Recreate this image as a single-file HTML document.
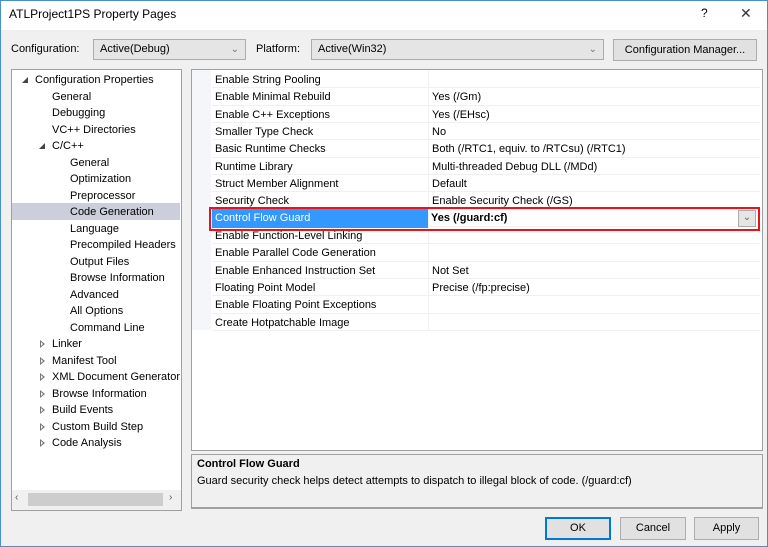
<!DOCTYPE html>
<html><head><style>
*{margin:0;padding:0;box-sizing:border-box}
body{width:768px;height:547px;overflow:hidden;background:#f0f0f0;font-family:"Liberation Sans",sans-serif;font-size:11px;color:#000;position:relative}
.win{position:absolute;left:0;top:0;width:768px;height:547px;border:1px solid #4a90c8}
.a{position:absolute;white-space:nowrap}
.t{position:absolute;line-height:16px;white-space:nowrap}
.btn{position:absolute;background:#e1e1e1;border:1px solid #adadad;text-align:center;line-height:20px}
.combo{position:absolute;background:#e5e5e5;border:1px solid #acacac;line-height:19px;padding-left:6px}
.combo .ch{position:absolute;right:6px;top:0;color:#777;font-size:10px}
.row{position:absolute;left:212px;width:548px;height:17.3px;border-bottom:1px solid #f0f0f0}
.row .n{position:absolute;left:3px;top:1px;line-height:16px}
.row .v{position:absolute;left:220px;top:1px;line-height:16px}
.tri{position:absolute;width:0;height:0}
</style></head><body>
<div class="win"></div>
<div class="a" style="left:1px;top:1px;width:766px;height:29px;background:#fff"></div>
<div class="a" style="left:9px;top:7px;font-size:12px">ATLProject1PS Property Pages</div>
<div class="a" style="left:701px;top:6px;font-size:12px">?</div>
<div class="a" style="left:740px;top:5px;font-size:14px;color:#333;font-weight:100">✕</div>

<div class="a" style="left:11px;top:43px">Configuration:</div>
<div class="combo" style="left:93px;top:39px;width:153px;height:21px">Active(Debug)<span class="ch">&#8964;</span></div>
<div class="a" style="left:256px;top:43px">Platform:</div>
<div class="combo" style="left:311px;top:39px;width:293px;height:21px">Active(Win32)<span class="ch">&#8964;</span></div>
<div class="btn" style="left:613px;top:39px;width:144px;height:22px">Configuration Manager...</div>

<div class="a" style="left:11px;top:69px;width:171px;height:442px;background:#fff;border:1px solid #a0a0a0"></div>
<div class="a" style="left:12px;top:203px;width:168px;height:17px;background:#cccedb"></div>
<div id="tree"></div>
<div class="a" style="left:12px;top:490px;width:169px;height:20px;background:#f0f0f0"></div>
<div class="a" style="left:28px;top:493px;width:135px;height:13px;background:#cdcdcd"></div>
<div class="a" style="left:15px;top:492px;color:#555;font-size:10px">&lsaquo;</div>
<div class="a" style="left:169px;top:492px;color:#555;font-size:10px">&rsaquo;</div>

<div class="a" style="left:191px;top:69px;width:572px;height:382px;background:#fff;border:1px solid #a0a0a0"></div>
<div class="a" style="left:192px;top:70px;width:19px;height:260px;background:#f5f6f9"></div>
<div class="a" style="left:428px;top:70px;width:1px;height:260px;background:#f0f0f0"></div>
<div id="grid"></div>
<div class="a" style="left:212px;top:209px;width:216px;height:19px;background:#3399ff"></div>
<div class="a" style="left:215px;top:212px;color:#fff">Control Flow Guard</div>
<div class="a" style="left:431px;top:212px;font-weight:bold">Yes (/guard:cf)</div>
<div class="a" style="left:738px;top:210px;width:18px;height:17px;background:#e5e5e5;border:1px solid #acacac;font-size:10px;text-align:center;color:#666;line-height:14px">&#8964;</div>
<div class="a" style="left:209px;top:207px;width:551px;height:24px;border:2px solid #e8141c"></div>

<div class="a" style="left:191px;top:454px;width:572px;height:55px;background:#f0f0f0;border:1px solid #a0a0a0;border-bottom:2px solid #a0a0a0"></div>
<div class="a" style="left:197px;top:458px;font-weight:bold">Control Flow Guard</div>
<div class="a" style="left:197px;top:475px">Guard security check helps detect attempts to dispatch to illegal block of code. (/guard:cf)</div>

<div class="btn" style="left:545px;top:517px;width:66px;height:23px;border:1px solid #0078d7;box-shadow:inset 0 0 0 1px #0078d7">OK</div>
<div class="btn" style="left:620px;top:517px;width:66px;height:23px">Cancel</div>
<div class="btn" style="left:694px;top:517px;width:65px;height:23px">Apply</div>

<script>
var tr=[[0,'Configuration Properties','o'],[1,'General'],[1,'Debugging'],[1,'VC++ Directories'],[1,'C/C++','o'],[2,'General'],[2,'Optimization'],[2,'Preprocessor'],[2,'Code Generation'],[2,'Language'],[2,'Precompiled Headers'],[2,'Output Files'],[2,'Browse Information'],[2,'Advanced'],[2,'All Options'],[2,'Command Line'],[1,'Linker','c'],[1,'Manifest Tool','c'],[1,'XML Document Generator','c'],[1,'Browse Information','c'],[1,'Build Events','c'],[1,'Custom Build Step','c'],[1,'Code Analysis','c']];
var h='';
tr.forEach(function(e,i){var y=72+i*16.5;var x=[35,52,70][e[0]];
var ax=x-13;
if(e[2]=='o')h+='<div class="tri" style="left:'+(ax)+'px;top:'+(y+5)+'px;border-left:6px solid transparent;border-bottom:6px solid #444"></div>';
if(e[2]=='c')h+='<div class="tri" style="left:'+(ax+1)+'px;top:'+(y+4)+'px;border-top:4px solid transparent;border-bottom:4px solid transparent;border-left:5px solid #777"></div><div class="tri" style="left:'+(ax+2)+'px;top:'+(y+6)+'px;border-top:2px solid transparent;border-bottom:2px solid transparent;border-left:2.5px solid #fff"></div>';
h+='<div class="t" style="left:'+x+'px;top:'+y+'px">'+e[1]+'</div>';});
document.getElementById('tree').innerHTML=h;
var g=[['Enable String Pooling',''],['Enable Minimal Rebuild','Yes (/Gm)'],['Enable C++ Exceptions','Yes (/EHsc)'],['Smaller Type Check','No'],['Basic Runtime Checks','Both (/RTC1, equiv. to /RTCsu) (/RTC1)'],['Runtime Library','Multi-threaded Debug DLL (/MDd)'],['Struct Member Alignment','Default'],['Security Check','Enable Security Check (/GS)'],['',''],['Enable Function-Level Linking',''],['Enable Parallel Code Generation',''],['Enable Enhanced Instruction Set','Not Set'],['Floating Point Model','Precise (/fp:precise)'],['Enable Floating Point Exceptions',''],['Create Hotpatchable Image','']];
h='';g.forEach(function(e,i){var y=71+i*17.33;h+='<div class="row" style="top:'+y+'px"><span class="n">'+e[0]+'</span><span class="v">'+e[1]+'</span></div>';});
document.getElementById('grid').innerHTML=h;
</script>
</body></html>
